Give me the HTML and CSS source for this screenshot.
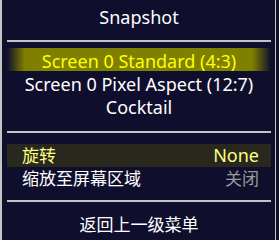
FILE: index.html
```html
<!DOCTYPE html>
<html lang="zh-CN">
<head>
    <meta charset="UTF-8">
    <title>Snapshot</title>
    <link rel="stylesheet" href="styles.css">
</head>
<body>
    <div class="menu">
        <div class="title">Snapshot</div>
        <div class="sep"></div>
        <div class="items">
            <div class="item center latin selected">Screen 0 Standard (4:3)</div>
            <div class="item center latin">Screen 0 Pixel Aspect (12:7)</div>
            <div class="item center latin">Cocktail</div>
        </div>
        <div class="sep sep-mid"></div>
        <div class="items">
            <div class="item hover"><span class="cjk">旋转</span><span>None</span></div>
            <div class="item"><span class="cjk">缩放至屏幕区域</span><span class="cjk off">关闭</span></div>
        </div>
        <div class="sep sep-low"></div>
        <div class="item center back"><span class="cjk">返回上一级菜单</span></div>
    </div>
</body>
</html>
```

FILE: styles.css
```css
body {
    margin: 0;
    background-color: #0f0e2c;
    font-family: 'Noto Sans', 'Noto Sans CJK SC', sans-serif;
    font-size: 18px;
    color: #fff;
}

.menu {
    height: 240px;
    margin-right: 3px;
    border-left: 2px solid #c4c4c4;
    border-right: 1px solid #c4c4c4;
    box-sizing: border-box;
    padding: 6px 4px 0 5px;
}

.title {
    height: 23px;
    line-height: 23px;
    text-align: center;
}

.sep {
    height: 2px;
    background-color: #c4c4c4;
    margin: 11px 0 6px;
}

.sep-mid {
    margin: 14px 0 11px;
}

.sep-low {
    margin: 10px 0 11px;
}

.item {
    height: 23px;
    line-height: 23px;
    display: flex;
    justify-content: space-between;
    padding: 0 12px 0 15px;
    white-space: nowrap;
}

.item.center {
    justify-content: center;
    padding: 0;
}

.item.latin {
    box-sizing: border-box;
    padding-top: 4px;
    line-height: 19px;
}

.cjk {
    font-size: 17px;
}

.item.selected {
    color: #ffff00;
    background: linear-gradient(to right, rgba(128, 128, 0, 0), #808000 18px, #808000 calc(100% - 19px), rgba(128, 128, 0, 0));
}

.item.hover {
    color: #ffff80;
    background-color: #28281e;
}

.off {
    color: #9a9a9a;
}
```
